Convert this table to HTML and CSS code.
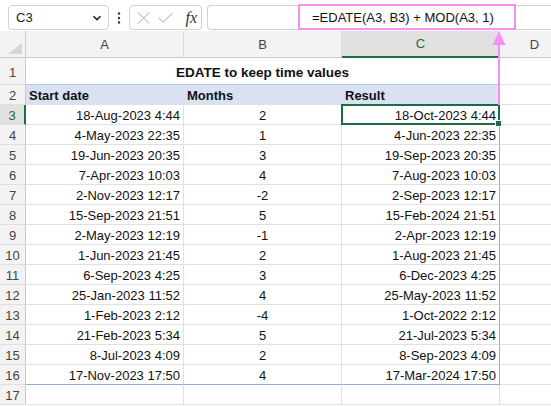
FILE: index.html
```html
<!DOCTYPE html>
<html>
<head>
<meta charset="utf-8">
<link rel="stylesheet" href="styles.css">
</head>
<body>
<div class="app">
  <div class="fbar">
    <div class="namebox">
      <span>C3</span>
      <svg class="chev" width="10" height="6" viewBox="0 0 10 6"><path d="M1.5 1.2 L5 4.6 L8.5 1.2" fill="none" stroke="#222" stroke-width="1.6"/></svg>
    </div>
    <svg class="dots" width="4" height="12" viewBox="0 0 4 12"><circle cx="2" cy="1.5" r="1.2" fill="#333"/><circle cx="2" cy="6" r="1.2" fill="#333"/><circle cx="2" cy="10.5" r="1.2" fill="#333"/></svg>
    <div class="fxbox">
      <svg width="14" height="14" viewBox="0 0 14 14"><path d="M1 1 L13 13 M13 1 L1 13" stroke="#c4c4c4" stroke-width="1.2" fill="none"/></svg>
      <svg width="16" height="12" viewBox="0 0 16 12"><path d="M1 6 L5.5 10.5 L15 1" stroke="#c4c4c4" stroke-width="1.2" fill="none"/></svg>
      <span class="fx">fx</span>
    </div>
    <div class="formula"><span>=EDATE(A3, B3) + MOD(A3, 1)</span></div>
  </div>

  <div class="sheet">
    <div class="row hdr">
      <div class="corner"><svg width="14" height="11" viewBox="0 0 14 11"><path d="M14 0 L14 11 L0 11 Z" fill="#d6d6d6"/></svg></div>
      <div class="ch">A</div><div class="ch">B</div><div class="ch sel">C</div><div class="ch">D</div>
    </div>
    <div class="row r1">
      <div class="rh">1</div>
      <div class="c title">EDATE to keep time values</div>
      <div class="c"></div>
    </div>
    <div class="row r2">
      <div class="rh">2</div>
      <div class="c th">Start date</div><div class="c th">Months</div><div class="c th last">Result</div><div class="c"></div>
    </div>
    <div class="row"><div class="rh sel">3</div><div class="c r">18-Aug-2023 4:44</div><div class="c m">2</div><div class="c r last active">18-Oct-2023 4:44</div><div class="c"></div></div>
    <div class="row"><div class="rh">4</div><div class="c r">4-May-2023 22:35</div><div class="c m">1</div><div class="c r last">4-Jun-2023 22:35</div><div class="c"></div></div>
    <div class="row"><div class="rh">5</div><div class="c r">19-Jun-2023 20:35</div><div class="c m">3</div><div class="c r last">19-Sep-2023 20:35</div><div class="c"></div></div>
    <div class="row"><div class="rh">6</div><div class="c r">7-Apr-2023 10:03</div><div class="c m">4</div><div class="c r last">7-Aug-2023 10:03</div><div class="c"></div></div>
    <div class="row"><div class="rh">7</div><div class="c r">2-Nov-2023 12:17</div><div class="c m">-2</div><div class="c r last">2-Sep-2023 12:17</div><div class="c"></div></div>
    <div class="row"><div class="rh">8</div><div class="c r">15-Sep-2023 21:51</div><div class="c m">5</div><div class="c r last">15-Feb-2024 21:51</div><div class="c"></div></div>
    <div class="row"><div class="rh">9</div><div class="c r">2-May-2023 12:19</div><div class="c m">-1</div><div class="c r last">2-Apr-2023 12:19</div><div class="c"></div></div>
    <div class="row"><div class="rh">10</div><div class="c r">1-Jun-2023 21:45</div><div class="c m">2</div><div class="c r last">1-Aug-2023 21:45</div><div class="c"></div></div>
    <div class="row"><div class="rh">11</div><div class="c r">6-Sep-2023 4:25</div><div class="c m">3</div><div class="c r last">6-Dec-2023 4:25</div><div class="c"></div></div>
    <div class="row"><div class="rh">12</div><div class="c r">25-Jan-2023 11:52</div><div class="c m">4</div><div class="c r last">25-May-2023 11:52</div><div class="c"></div></div>
    <div class="row"><div class="rh">13</div><div class="c r">1-Feb-2023 2:12</div><div class="c m">-4</div><div class="c r last">1-Oct-2022 2:12</div><div class="c"></div></div>
    <div class="row"><div class="rh">14</div><div class="c r">21-Feb-2023 5:34</div><div class="c m">5</div><div class="c r last">21-Jul-2023 5:34</div><div class="c"></div></div>
    <div class="row"><div class="rh">15</div><div class="c r">8-Jul-2023 4:09</div><div class="c m">2</div><div class="c r last">8-Sep-2023 4:09</div><div class="c"></div></div>
    <div class="row r16"><div class="rh">16</div><div class="c r">17-Nov-2023 17:50</div><div class="c m">4</div><div class="c r last">17-Mar-2024 17:50</div><div class="c"></div></div>
    <div class="row"><div class="rh">17</div><div class="c"></div><div class="c"></div><div class="c"></div><div class="c"></div></div>
  </div>

  <div class="pinkbox"></div>
  <svg class="arrow" width="16" height="76" viewBox="0 0 16 76"><path d="M8 1 L14.5 15 L1.5 15 Z" fill="#f78ef4"/><rect x="7" y="12" width="2" height="63" fill="#f78ef4"/></svg>
</div>
</body>
</html>
```

FILE: styles.css
```css
* { box-sizing: border-box; }
html, body { margin: 0; padding: 0; background: #fff; }
body { font-family: "Liberation Sans", Arial, sans-serif; font-size: 13px; color: #111; overflow: hidden; }
.app { position: relative; width: 551px; height: 406px; overflow: hidden; }

.fbar { height: 31px; display: flex; align-items: flex-start; padding-top: 5px; padding-left: 8px; background: #fff; }
.namebox { width: 101px; height: 25px; border: 1px solid #d2d2d2; border-radius: 4px; display: flex; align-items: center; justify-content: space-between; padding: 0 6px 0 7px; font-size: 13px; color: #222; }
.chev { margin-top: 1px; }
.dots { margin: 7px 8px 0 8px; }
.fxbox { width: 73px; height: 25px; border: 1px solid #d2d2d2; border-radius: 4px; display: flex; align-items: center; padding: 0 4px 0 7px; gap: 8px; }
.fx { font-family: "Liberation Serif", serif; font-style: italic; font-size: 16px; color: #333; margin-left: 4px; }
.formula { margin-left: 5px; flex: 1; height: 25px; border: 1px solid #d2d2d2; border-right: none; border-radius: 4px 0 0 4px; display: flex; align-items: center; padding-left: 104px; font-size: 13px; color: #111; white-space: nowrap; }

.sheet { display: flex; flex-direction: column; }
.row { display: grid; grid-template-columns: 26px 158px 158px 158px 70px; height: 20px; }
.row > div { border-right: 1px solid #e0e0e0; border-bottom: 1px solid #e0e0e0; display: flex; align-items: center; white-space: nowrap; overflow: hidden; }
.row.hdr { height: 27px; }
.row.r1 { height: 27px; grid-template-columns: 26px 474px 70px; }

.corner { background: #f3f3f3; border-right-color: #c9c9c9 !important; border-bottom-color: #c9c9c9 !important; align-items: flex-end !important; justify-content: flex-end; padding: 0 3px 3px 0; }
.ch { background: #f3f3f3; justify-content: center; color: #444; border-bottom-color: #c9c9c9 !important; border-right-color: #dcdcdc !important; }
.ch.sel { background: #e0e0e0; color: #1e6b3f; border-bottom: 2px solid #1e6b3f !important; }

.rh { background: #f3f3f3; justify-content: center; color: #444; border-right-color: #c9c9c9 !important; border-bottom-color: #e0e0e0; padding-top: 2px; }
.rh.sel { background: #e0e0e0; color: #1e6b3f; border-right: 2px solid #1e6b3f !important; }

.c { padding: 0 3px; }
.c.r { justify-content: flex-end; padding-top: 1px; }
.c.m { justify-content: center; padding-top: 1px; }
.title { justify-content: center; font-weight: bold; font-size: 13.5px; border-right-color: #8ea9db !important; border-bottom-color: #b4c6e7 !important; padding-top: 2px; }
.r2 .th { background: #d9e1f2; font-weight: bold; border-right-color: #d9e1f2; padding-top: 2px; }
.r2 .th.last { border-right-color: #8ea9db; }
.c.last { border-right-color: #8ea9db; }
.r16 .c { border-bottom-color: #8ea9db; }
.r16 > .c:last-child { border-bottom-color: #e0e0e0; }

.active { position: relative; overflow: visible !important; }
.active::before { content: ""; position: absolute; left: -1px; top: -1px; right: -1px; bottom: -1px; border: 2px solid #1e6b3f; }
.active::after { content: ""; position: absolute; right: -3px; bottom: -3px; width: 5px; height: 5px; background: #1e6b3f; border: 1px solid #fff; }

.pinkbox { position: absolute; left: 298px; top: 4px; width: 218px; height: 26px; border: 2px solid #f78ef4; }
.arrow { position: absolute; left: 491px; top: 30px; }
```
